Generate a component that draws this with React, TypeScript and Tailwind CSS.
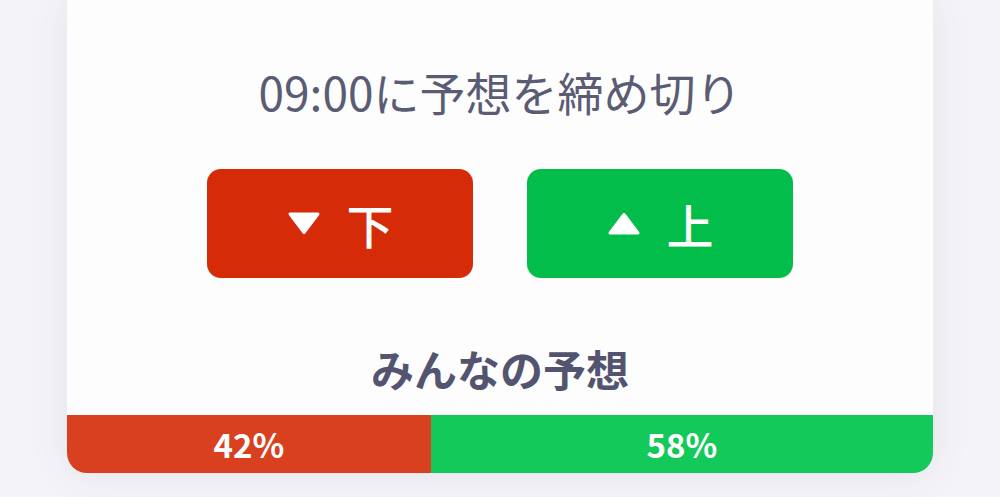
import React from "react";

const jp = { fontFamily: '"Noto Sans CJK JP", "Noto Sans", sans-serif' };

function Tri({ up }: { up?: boolean }) {
  return (
    <svg width="34" height="23" viewBox="0 0 34 23" className="block">
      <polygon
        points={up ? "3,21 31,21 17,2.5" : "3,2 31,2 17,20.5"}
        fill="#ffffff"
        stroke="#ffffff"
        strokeWidth="3"
        strokeLinejoin="round"
      />
    </svg>
  );
}

export default function App() {
  return (
    <div
      className="w-[1000px] h-[497px] overflow-hidden flex justify-center bg-[#f4f4f8]"
      style={jp}
    >
      <div className="w-[866px] h-[473px] bg-[#fdfdfd] rounded-b-[20px] shadow-[0_0_40px_rgba(30,30,80,0.09)] flex flex-col items-center overflow-hidden">
        <div className="mt-[65px] h-[52px] flex items-center text-[46px] leading-none font-normal text-[#5a5c74]">
          09:00に予想を締め切り
        </div>
        <div className="mt-[52px] flex gap-[54px]">
          <div className="w-[266px] h-[109px] rounded-[14px] bg-[#d52b08] flex items-center justify-center gap-[26px]">
            <Tri />
            <span className="text-[47px] leading-none font-medium text-white">下</span>
          </div>
          <div className="w-[266px] h-[109px] rounded-[14px] bg-[#03bd4b] flex items-center justify-center gap-[26px]">
            <Tri up />
            <span className="text-[47px] leading-none font-medium text-white">上</span>
          </div>
        </div>
        <div className="mt-[66px] h-[48px] flex items-center text-[43px] leading-none font-bold text-[#535570]">
          みんなの予想
        </div>
        <div className="mt-auto w-full h-[58px] flex text-white font-bold text-[33px] leading-none">
          <div className="w-[42%] bg-[#d9401f] flex items-center justify-center">42%</div>
          <div className="flex-1 bg-[#13c95a] flex items-center justify-center">58%</div>
        </div>
      </div>
    </div>
  );
}
